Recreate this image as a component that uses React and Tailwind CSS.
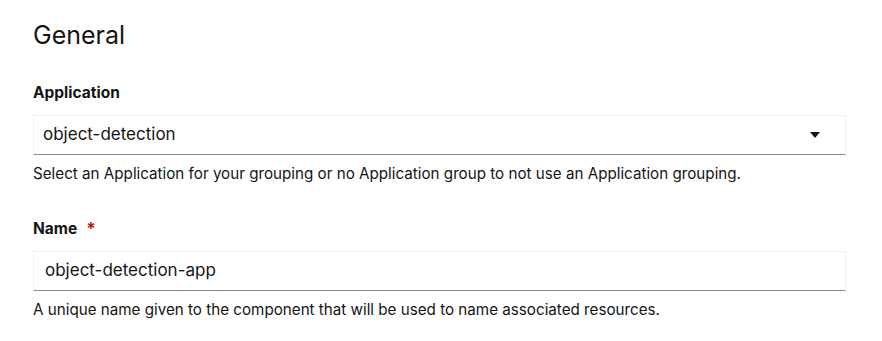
const font = { fontFamily: "Inter, 'Noto Sans', sans-serif" };

const Field = ({ label, required, children, help }) => (
  <div className="flex flex-col">
    <label className="flex items-start text-[15.5px] font-bold leading-[22px] text-[#151515]">
      {label}
      {required && (
        <span className="ml-[9px] text-[17px] leading-[22px] font-bold text-[#c9190b]">*</span>
      )}
    </label>
    <div className="mt-[11px]">{children}</div>
    <p className="mt-[8px] text-[15.2px] leading-[22px] text-[#151515]">{help}</p>
  </div>
);

const App = () => {
  return (
    <div className="bg-white w-[882px] h-[341px] pl-[33px] pr-[36px] pt-[18px]" style={font}>
      <h1 className="text-[25px] leading-[34px] text-[#151515]">General</h1>
      <div className="mt-[30px] flex flex-col gap-[33px]">
        <Field
          label="Application"
          help="Select an Application for your grouping or no Application group to not use an Application grouping."
        >
          <div className="flex items-center h-[40px] border border-[#f0f0f0] border-b-[#8a8d90] pl-[9px] pr-[25px]">
            <span className="flex-1 text-[17px] text-[#151515]">object-detection</span>
            <svg width="10" height="6" viewBox="0 0 10 6">
              <path d="M0 0h10L5 6z" fill="#151515" />
            </svg>
          </div>
        </Field>
        <Field
          label="Name"
          required
          help="A unique name given to the component that will be used to name associated resources."
        >
          <div className="flex items-center h-[40px] border border-[#f0f0f0] border-b-[#8a8d90] px-[11px]">
            <span className="text-[17px] text-[#151515]">object-detection-app</span>
          </div>
        </Field>
      </div>
    </div>
  );
};

export default App;
